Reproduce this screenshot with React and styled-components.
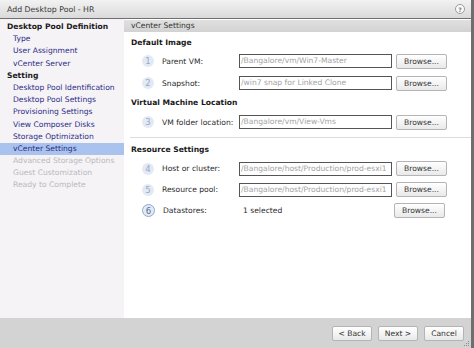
import React from "react";
import styled, { createGlobalStyle } from "styled-components";

const GlobalStyle = createGlobalStyle`
  html, body {
    margin: 0;
    padding: 0;
    background: #6e6e6e;
  }
  body {
    font-family: "DejaVu Sans", Verdana, sans-serif;
    font-size: 7.6px;
    color: #222;
  }
`;

const Dialog = styled.div`
  width: 471px;
  height: 348px;
  display: flex;
  flex-direction: column;
  background: #ffffff;
  position: relative;
  overflow: hidden;
`;

const TitleBar = styled.div`
  height: 18px;
  flex: none;
  display: flex;
  align-items: center;
  justify-content: space-between;
  padding: 0 6px 0 7px;
  background: linear-gradient(#f2f2f2, #dadada);
  border-bottom: 1px solid #6f6f6f;
  color: #3a3a3a;
  font-size: 7.8px;
`;

const HelpIcon = styled.span`
  width: 8px;
  height: 8px;
  border-radius: 50%;
  border: 1px solid #9a9a9a;
  background: #fbfbfb;
  color: #777;
  font-size: 6px;
  font-weight: bold;
  display: flex;
  align-items: center;
  justify-content: center;
`;

const Body = styled.div`
  flex: 1;
  display: flex;
  min-height: 0;
`;

const Sidebar = styled.div`
  width: 124px;
  flex: none;
  background: #f5f3f6;
  padding-top: 2px;
`;

const NavItem = styled.div`
  height: 12.2px;
  line-height: 12.2px;
  white-space: nowrap;
  padding-left: ${(p) => (p.$heading ? 7 : 13)}px;
  font-weight: ${(p) => (p.$heading ? "bold" : "normal")};
  color: ${(p) =>
    p.$heading ? "#1a1a1a" : p.$disabled ? "#b9b9bd" : "#2c2c86"};
  background: ${(p) => (p.$active ? "#a9c3ee" : "transparent")};
`;

const Main = styled.div`
  flex: 1;
  display: flex;
  flex-direction: column;
  padding-top: 1px;
`;

const PanelHeader = styled.div`
  height: 12px;
  line-height: 12px;
  padding-left: 7px;
  background: linear-gradient(#e0e0e0, #d2d2d2);
  color: #333;
`;

const Content = styled.div`
  padding-left: 7px;
`;

const SectionTitle = styled.div`
  height: 12px;
  line-height: 12px;
  font-weight: bold;
  color: #1a1a1a;
  margin-top: ${(p) => p.$mt}px;
`;

const Row = styled.div`
  display: flex;
  align-items: center;
  height: ${(p) => p.$h}px;
  margin-top: ${(p) => p.$mt || 0}px;
  padding-left: 11px;
`;

const Step = styled.span`
  width: ${(p) => (p.$active ? 11 : 12)}px;
  height: ${(p) => (p.$active ? 11 : 12)}px;
  border-radius: 50%;
  flex: none;
  display: flex;
  align-items: center;
  justify-content: center;
  font-size: 8.5px;
  background: #e3eaf4;
  color: ${(p) => (p.$active ? "#4f6e9c" : "#95a9c6")};
  border: ${(p) => (p.$active ? "1px solid #8fa9cf" : "0")};
`;

const Label = styled.span`
  width: 77px;
  flex: none;
  margin-left: 8px;
  color: #2a2a2a;
  white-space: nowrap;
`;

const Field = styled.div`
  width: 150px;
  height: 12px;
  flex: none;
  border: 1px solid #555;
  background: #fff;
  color: #a3a3a3;
  line-height: 12px;
  padding-left: 1px;
  overflow: hidden;
  white-space: nowrap;
`;

const Value = styled.span`
  width: 152px;
  flex: none;
  color: #2a2a2a;
  padding-left: 3px;
  box-sizing: border-box;
`;

const Button = styled.button`
  font-family: "DejaVu Sans", Verdana, sans-serif;
  font-size: 7.6px;
  color: #333;
  width: ${(p) => p.$w || 51}px;
  height: 15px;
  margin-left: ${(p) => p.$ml ?? 4}px;
  padding: 0;
  border: 1px solid #b4b4b4;
  border-radius: 2px;
  background: linear-gradient(#ffffff, #e9e9e9);
  flex: none;
`;

const Separator = styled.div`
  height: 1px;
  background: #dcdcdc;
  margin-top: 4px;
  margin-left: -1px;
`;

const Footer = styled.div`
  height: 30px;
  flex: none;
  background: #d3d3d3;
  display: flex;
  align-items: center;
  justify-content: flex-end;
  padding-right: 7px;
  gap: 6px;
`;

const FooterButton = styled(Button)`
  width: 40px;
  margin-left: 0;
`;

const Grip = styled.svg`
  position: absolute;
  right: 1px;
  bottom: 1px;
`;

const nav = [
  { text: "Desktop Pool Definition", heading: true },
  { text: "Type" },
  { text: "User Assignment" },
  { text: "vCenter Server" },
  { text: "Setting", heading: true },
  { text: "Desktop Pool Identification" },
  { text: "Desktop Pool Settings" },
  { text: "Provisioning Settings" },
  { text: "View Composer Disks" },
  { text: "Storage Optimization" },
  { text: "vCenter Settings", active: true },
  { text: "Advanced Storage Options", disabled: true },
  { text: "Guest Customization", disabled: true },
  { text: "Ready to Complete", disabled: true },
];

function SettingRow({ n, label, value, h, mt, active, plain }) {
  return (
    <Row $h={h} $mt={mt}>
      <Step $active={active}>{n}</Step>
      <Label>{label}</Label>
      {plain ? <Value>{value}</Value> : <Field>{value}</Field>}
      <Button $ml={plain ? 2 : 4}>Browse...</Button>
    </Row>
  );
}

export default function App() {
  return (
    <>
      <GlobalStyle />
      <Dialog>
        <TitleBar>
          <span>Add Desktop Pool - HR</span>
          <HelpIcon>?</HelpIcon>
        </TitleBar>
        <Body>
          <Sidebar>
            {nav.map((item) => (
              <NavItem
                key={item.text}
                $heading={item.heading}
                $active={item.active}
                $disabled={item.disabled}
              >
                {item.text}
              </NavItem>
            ))}
          </Sidebar>
          <Main>
            <PanelHeader>vCenter Settings</PanelHeader>
            <Content>
              <SectionTitle $mt={5}>Default Image</SectionTitle>
              <SettingRow n="1" label="Parent VM:" value="/Bangalore/vm/Win7-Master" h={22} mt={1} />
              <SettingRow n="2" label="Snapshot:" value="/win7 snap for Linked Clone" h={22} />
              <SectionTitle $mt={3}>Virtual Machine Location</SectionTitle>
              <SettingRow n="3" label="VM folder location:" value="/Bangalore/vm/View-Vms" h={22} mt={2} />
              <Separator />
              <SectionTitle $mt={6}>Resource Settings</SectionTitle>
              <SettingRow n="4" label="Host or cluster:" value="/Bangalore/host/Production/prod-esxi1" h={21} mt={2} />
              <SettingRow n="5" label="Resource pool:" value="/Bangalore/host/Production/prod-esxi1" h={21} />
              <SettingRow n="6" label="Datastores:" value="1 selected" h={21} active plain />
            </Content>
          </Main>
        </Body>
        <Footer>
          <FooterButton>&lt; Back</FooterButton>
          <FooterButton>Next &gt;</FooterButton>
          <FooterButton>Cancel</FooterButton>
        </Footer>
        <Grip width="7" height="7" viewBox="0 0 7 7">
          <g fill="#8a8a8a">
            <rect x="5" y="1" width="1" height="1" />
            <rect x="3" y="3" width="1" height="1" />
            <rect x="5" y="3" width="1" height="1" />
            <rect x="1" y="5" width="1" height="1" />
            <rect x="3" y="5" width="1" height="1" />
            <rect x="5" y="5" width="1" height="1" />
          </g>
        </Grip>
      </Dialog>
    </>
  );
}
